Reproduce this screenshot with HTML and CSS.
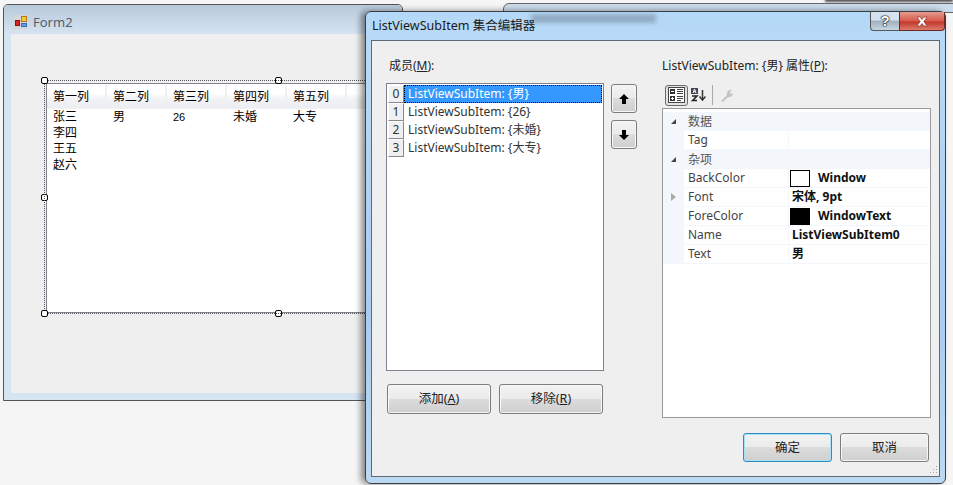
FILE: index.html
```html
<!DOCTYPE html>
<html lang="zh">
<head>
<meta charset="utf-8">
<title>Form2</title>
<link rel="stylesheet" href="styles.css">
</head>
<body>
<div class="desk">
  <div class="form">
    <div class="form-title">
      <svg class="form-icon" width="14" height="14" viewBox="0 0 14 14"><rect width="14" height="14" fill="#d5d5d5"/><rect x="7.500" y="1.500" width="5" height="5" fill="#f7c93a" stroke="#b27a10"/><rect x="1.500" y="5.500" width="4" height="5" fill="#d22" stroke="#811"/><rect x="7.500" y="8.500" width="5" height="3" fill="#5f9be8" stroke="#3a6fc0"/></svg>
      <span>Form2</span>
    </div>
    <div class="form-client">
      <div class="lv">
        <div class="lv-head"><span>第一列</span><span>第二列</span><span>第三列</span><span>第四列</span><span>第五列</span></div>
        <div class="lv-row"><span>张三</span><span>男</span><span class="small">26</span><span>未婚</span><span>大专</span></div>
        <div class="lv-row"><span>李四</span></div>
        <div class="lv-row"><span>王五</span></div>
        <div class="lv-row"><span>赵六</span></div>
      </div>
    </div>
    <i class="handle h1"></i><i class="handle h2"></i><i class="handle h3"></i><i class="handle h4"></i><i class="handle h5"></i>
    <i class="dots dots-top"></i><i class="dots dots-bottom"></i><i class="dots dots-left"></i>
  </div>

  <div class="backwin"></div>
  <div class="blur-top"></div>

  <div class="dialog">
    <div class="blur-title"></div>
    <div class="dlg-title">
      <span>ListViewSubItem 集合编辑器</span>
      <div class="caps">
        <div class="cap-help">?</div>
        <div class="cap-close"><svg width="14" height="11" viewBox="0 0 14 11"><path d="M2 1h3l2 2.500L9 1h3L8.800 5.500 12 10H9L7 7.500 5 10H2l3.200-4.500z" fill="#fff" stroke="#7a2a22" stroke-width=".6"/></svg></div>
      </div>
    </div>
    <div class="dlg-client">
      <div class="left">
        <div class="lbl">成员(<u>M</u>):</div>
        <div class="members-wrap">
          <div class="members">
            <div class="m-row sel"><b>0</b><span>ListViewSubItem: {男}</span></div>
            <div class="m-row"><b>1</b><span>ListViewSubItem: {26}</span></div>
            <div class="m-row"><b>2</b><span>ListViewSubItem: {未婚}</span></div>
            <div class="m-row"><b>3</b><span>ListViewSubItem: {大专}</span></div>
          </div>
          <div class="updown">
            <button class="btn arrow"><svg width="12" height="12" viewBox="0 0 12 12"><path d="M6 1l5 5H8v5H4V6H1z" fill="#000"/></svg></button>
            <button class="btn arrow"><svg width="12" height="12" viewBox="0 0 12 12"><path d="M6 11L1 6h3V1h4v5h3z" fill="#000"/></svg></button>
          </div>
        </div>
        <div class="left-btns">
          <button class="btn wide">添加(<u>A</u>)</button>
          <button class="btn wide">移除(<u>R</u>)</button>
        </div>
      </div>
      <div class="right">
        <div class="lbl">ListViewSubItem: {男} 属性(<u>P</u>):</div>
        <div class="tools">
          <div class="tool on"><svg width="17" height="16" viewBox="0 0 17 16"><rect x=".5" y=".5" width="16" height="15" fill="#fff" stroke="#444"/><path d="M2 2h5v5H2zM2 9h5v5H2z" fill="#333"/><path d="M3 4.500h3M3 11.500h3M4.500 10v3" stroke="#fff"/><path d="M9 2.500h6M9 4.500h6M9 6.500h6M9 9.500h6M9 11.500h6M9 13.500h4" stroke="#444"/></svg></div>
          <div class="tool sort"><svg width="15" height="14" viewBox="0 0 15 14"><path d="M0 0h7v6H0z" fill="#445"/><path d="M2 5l1.500-4L5 5M2.500 3.700h2" stroke="#fff" fill="none"/><path d="M1 8h5L1.500 12.500H6" stroke="#222" stroke-width="1.500" fill="none"/><path d="M11.500 2v9" stroke="#333" stroke-width="1.500"/><path d="M8.500 8.500l3 3.500 3-3.500" stroke="#333" stroke-width="1.500" fill="none"/></svg></div>
          <div class="tool-sep"></div>
          <div class="tool wrench"><svg width="15" height="15" viewBox="0 0 15 15"><path d="M1 13l6-6a4 4 0 0 1 5-5l-2 2 1 2 2-1a4 4 0 0 1-5 4l-5 5z" fill="#c4c4c4"/></svg></div>
        </div>
        <div class="grid">
          <div class="cat"><i class="tri"></i><span>数据</span></div>
          <div class="prop"><span class="gut"></span><span class="name">Tag</span><span class="val"></span></div>
          <div class="cat"><i class="tri"></i><span>杂项</span></div>
          <div class="prop"><span class="gut"></span><span class="name">BackColor</span><span class="val"><i class="swatch white"></i>Window</span></div>
          <div class="prop"><span class="gut"><i class="tri-open"></i></span><span class="name">Font</span><span class="val">宋体, 9pt</span></div>
          <div class="prop"><span class="gut"></span><span class="name">ForeColor</span><span class="val"><i class="swatch black"></i>WindowText</span></div>
          <div class="prop"><span class="gut"></span><span class="name">Name</span><span class="val">ListViewSubItem0</span></div>
          <div class="prop"><span class="gut"></span><span class="name">Text</span><span class="val">男</span></div>
        </div>
      </div>
      <div class="foot">
        <button class="btn foot-btn default">确定</button>
        <button class="btn foot-btn">取消</button>
      </div>
      <svg class="grip" width="10" height="10" viewBox="0 0 10 10"><path d="M8 1h1v1H8zM5 4h1v1H5zM8 4h1v1H8zM2 7h1v1H2zM5 7h1v1H5zM8 7h1v1H8z" fill="#a5a5a5"/></svg>
    </div>
  </div>
</div>
</body>
</html>
```
FILE: styles.css
```css
* { box-sizing: border-box; }
html, body { margin: 0; padding: 0; }
body { width: 953px; height: 485px; overflow: hidden; background: #f5f5f5; font: 12px/16px "Noto Sans", "Noto Sans CJK SC", sans-serif; color: #111; }
u { text-decoration: underline; }
i { display: block; }
.desk { position: relative; width: 953px; height: 485px; overflow: hidden; }

/* Form2 window */
.form { position: absolute; left: 3px; top: 4px; width: 400px; height: 397px; border: 1px solid #555; border-radius: 5px 5px 0 0; background: #d7e4f2; display: flex; flex-direction: column; padding: 0 7px 7px; }
.form-title { height: 29px; margin: 0 -7px; padding: 5px 0 0 10px; display: flex; align-items: center; gap: 5px; background: linear-gradient(#b8c9da, #d5e3f1); color: #555f6a; font-size: 13px; border-radius: 4px 4px 0 0; }
.form-client { flex: 1; background: #efefef; padding: 49px 0 0 35px; }
.lv { height: 230px; border: 1px solid #82828f; border-right: 0; background: #fff; }
.lv-head { height: 25px; display: flex; padding-top: 1px; background: linear-gradient(#fff 0, #fff 40%, #f2f3f5 60%, #eceef1); border-bottom: 1px solid #f0f0f0; }
.lv-head span { width: 60px; padding: 3px 0 0 6px; border-right: 2px solid #eef0f3; line-height: 18px; color: #000; }
.lv-row { height: 16px; display: flex; }
.lv-row span { width: 60px; padding-left: 6px; line-height: 16px; color: #000; }
.lv-row .small { font: 11px/16px "Liberation Sans", sans-serif; }

.handle { position: absolute; width: 7px; height: 7px; background: #fff; border: 1px solid #000; border-radius: 2px; }
.h1 { left: 37px; top: 72px; }
.h2 { left: 271px; top: 72px; }
.h3 { left: 37px; top: 189px; }
.h4 { left: 37px; top: 305px; }
.h5 { left: 271px; top: 305px; }
.dots { position: absolute; }
.dots-top { left: 44px; top: 75px; width: 352px; height: 1px; background: repeating-linear-gradient(90deg, #555 0 1px, transparent 1px 2px); }
.dots-bottom { left: 44px; top: 308px; width: 352px; height: 1px; background: repeating-linear-gradient(90deg, #555 0 1px, transparent 1px 2px); }
.dots-left { left: 40px; top: 79px; width: 1px; height: 226px; background: repeating-linear-gradient(#555 0 1px, transparent 1px 2px); }

/* behind */
.backwin { position: absolute; left: 503px; top: 3px; width: 460px; height: 10px; border: 1px solid #666; border-radius: 6px 0 0 0; background: #cbdcec; }
.blur-top { position: absolute; left: 825px; top: -2px; width: 128px; height: 4px; background: #555; filter: blur(1px); }

/* dialog */
.dialog { position: absolute; left: 365px; top: 11px; width: 581px; height: 473px; border: 1px solid #3a3f46; border-radius: 6px; background: linear-gradient(#b4d8f8, #b9daf6 40px, #a8cdee 300px, #bcd9f2); box-shadow: -4px 0 6px rgba(0, 0, 0, .45); padding: 0 5px 6px; display: flex; flex-direction: column; }
.blur-title { position: absolute; left: 165px; top: 2px; width: 125px; height: 9px; background: #7f94a8; opacity: .65; filter: blur(2px); }
.dlg-title { position: relative; height: 28px; flex: none; padding: 5px 0 0 1px; display: flex; justify-content: space-between; color: #1a1a1a; font-size: 12.5px; line-height: 18px; }
.caps { position: absolute; right: -5px; top: 0; display: flex; height: 19px; }
.cap-help { width: 29px; border: 1px solid #555; border-top: 0; border-right: 0; border-radius: 0 0 0 4px; background: linear-gradient(#d4e3f1 45%, #9fb0c1 50%, #c6d5e3); color: #fff; font: bold 15px/18px "Liberation Sans", sans-serif; text-align: center; text-shadow: 0 0 1px #000, 0 0 1px #000, 0 0 2px #000; }
.cap-close { width: 46px; border: 1px solid #6a2a24; border-top: 0; border-radius: 0 0 4px 0; background: linear-gradient(#e39b90, #d9584a 50%, #c0392b 55%, #dd7a6c); display: flex; align-items: center; justify-content: center; }
.dlg-client { position: relative; flex: 1; background: #efefef; border: 1px solid #5f6a76; padding: 16px 14px 0 14px; display: grid; grid-template-columns: 276px 269px; grid-template-rows: 360px 1fr; }
.lbl { height: 26px; padding: 1px 0 0 3px; line-height: 16px; color: #222; }
.members-wrap { display: flex; gap: 7px; }
.members { width: 218px; height: 288px; padding: 1px; background: #fff; border: 1px solid #82828f; }
.m-row { height: 18px; display: flex; line-height: 18px; color: #333; }
.m-row b { width: 16px; height: 18px; font-weight: 400; text-align: center; background: #f0f0f0; border: 1px solid; border-color: #fff #888 #888 #fff; font-size: 12px; line-height: 16px; }
.m-row span { flex: 1; padding-left: 4px; }
.m-row.sel span { background: #3399ff; color: #fff; outline: 1px dotted #000; outline-offset: -1px; }
.updown { display: flex; flex-direction: column; gap: 7px; padding-top: 1px; }
.btn { font: 12.5px/16px "Noto Sans", "Noto Sans CJK SC", sans-serif; color: #222; padding: 0; border: 1px solid #7d7d7d; border-radius: 3px; background: linear-gradient(#f2f2f2, #ebebeb 48%, #dcdcdc 50%, #cfcfcf); box-shadow: inset 0 0 0 1px #f7f7f7; display: flex; align-items: center; justify-content: center; }
.arrow { width: 26px; height: 29px; }
.left-btns { display: flex; gap: 8px; margin-top: 13px; padding-left: 1px; }
.wide { width: 104px; height: 30px; }
.right .lbl { padding-left: 0; }
.tools { display: flex; align-items: center; height: 24px; padding-left: 3px; }
.tool { display: flex; align-items: center; justify-content: center; }
.tool.on { width: 23px; height: 21px; border: 1px solid #6a6a6a; border-radius: 3px; background: #e3e3e3; }
.sort { margin-left: 3px; }
.tool-sep { width: 1px; height: 20px; background: #aaa; margin: 0 7px 0 6px; }
.grid { width: 269px; height: 310px; margin-top: 1px; padding-top: 3px; background: #fff; border: 1px solid #9a9a9a; }
.cat { height: 19px; background: #f3f6fb; display: flex; align-items: center; color: #555; padding-left: 8px; }
.cat span { margin-left: 12px; }
.tri { width: 0; height: 0; border-style: solid; border-width: 0 0 5px 5px; border-color: transparent transparent #444 transparent; }
.prop { height: 19px; display: grid; grid-template-columns: 21px 105px 1fr; line-height: 18px; border-bottom: 1px solid #f3f6fb; }
.gut { background: #f3f6fb; display: flex; align-items: center; justify-content: center; }
.name { color: #444; padding-left: 4px; border-right: 1px solid #f3f6fb; }
.val { font-weight: 700; color: #111; padding-left: 3px; display: flex; align-items: center; white-space: nowrap; }
.swatch { width: 20px; height: 17px; margin: 0 8px 0 -2px; border: 1px solid #000; }
.white { background: #fff; }
.black { background: #000; }
.tri-open { width: 0; height: 0; border-style: solid; border-width: 4px 0 4px 5px; border-color: transparent transparent transparent #aaa; }
.foot { grid-column: 1 / 3; display: flex; justify-content: flex-end; gap: 8px; padding: 16px 2px 0 0; }
.foot-btn { width: 89px; height: 29px; }
.default { border-color: #2e8ec4; box-shadow: inset 0 0 0 1px #a8e0f5; }
.grip { position: absolute; right: 1px; bottom: 1px; }
```
